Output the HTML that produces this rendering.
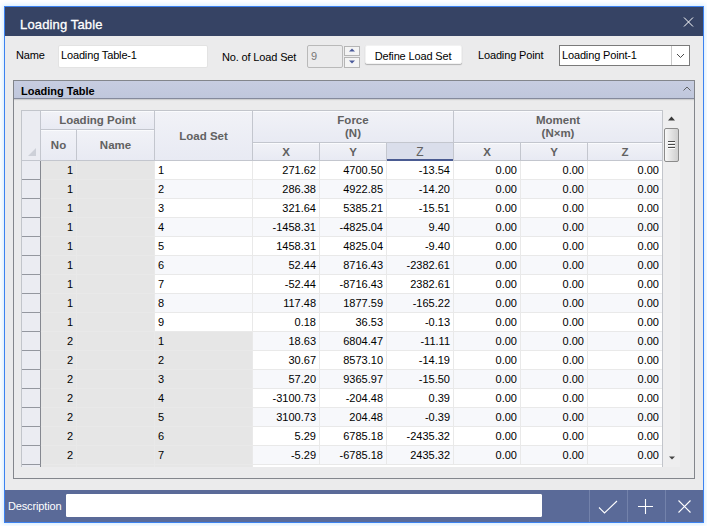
<!DOCTYPE html>
<html><head><meta charset="utf-8"><title>Loading Table</title>
<style>
html,body{margin:0;padding:0;background:#fff;}
body{width:707px;height:526px;position:relative;overflow:hidden;font-family:"Liberation Sans","DejaVu Sans",sans-serif;font-size:11px;color:#000;}
*{box-sizing:border-box;}
i{font-style:normal;}
.abs{position:absolute;}
#win{position:absolute;left:4px;top:6px;width:700px;height:517px;background:#ebebec;border:1px solid #3c82f0;box-shadow:0 0 5px 1px rgba(110,190,255,.32);}
#title{position:absolute;left:0;top:0;width:698px;height:29px;background:#364364;color:#fff;font-size:13px;font-weight:normal;-webkit-text-stroke:0.3px #fff;letter-spacing:0.15px;}
#title span{position:absolute;left:15px;top:10px;}
.lbl{position:absolute;white-space:nowrap;letter-spacing:-0.15px;}
.inp{position:absolute;background:#fff;border:1px solid #e3e3e3;border-radius:2px;white-space:nowrap;letter-spacing:-0.15px;}
#panel{position:absolute;left:8px;top:73px;width:682px;height:399px;border:1px solid #83868c;background:#ebebec;}
#phead{position:absolute;left:0;top:0;width:680px;height:18px;background:linear-gradient(#c7cde1,#c0c7dc);border-bottom:1px solid #858a9c;box-shadow:0 1px 1px rgba(0,0,0,.12);font-weight:bold;font-size:11px;}
#phead span{position:absolute;left:7px;top:4px;}
#grid{position:absolute;left:7px;top:29px;width:642px;height:357px;background:#fff;border:1px solid #c2c5cb;border-bottom:none;overflow:hidden;}
.h{position:absolute;background:linear-gradient(#f1f2f7,#e8eaf3);box-shadow:inset 0 1px 0 #fafbfd;border-right:1px solid #c3c6ce;border-bottom:1px solid #c3c6ce;color:#616161;font-weight:bold;text-align:center;font-size:11.5px;white-space:nowrap;}
#body{position:absolute;left:0;top:50px;width:641px;height:310px;}
.r{position:absolute;left:0;width:641px;height:19px;}
.c{position:absolute;top:0;height:19px;border-right:1px solid #e9e9e9;border-bottom:1px solid #e9e9e9;line-height:18px;font-size:11px;white-space:nowrap;}
.sel{position:absolute;left:-1px;top:0;width:20px;height:19px;background:#ebecf2;border-left:1px solid #858890;border-right:1px solid #858890;border-bottom:1px solid #94979f;}
.no{left:19px;width:36px;background:#e6e6e6;text-align:right;padding-right:3px;}
.nm{left:55px;width:78px;background:#e6e6e6;}
.ls{left:133px;width:98px;padding-left:3px;}
.alt .c{background:#f7f8fb;}
.alt .no,.alt .nm,.g,.alt .g{background:#e6e6e6;}
.n{text-align:right;padding-right:3px;}
.x1{left:231px;width:67px;}
.y1{left:298px;width:67px;}
.z1{left:365px;width:67px;}
.x2{left:432px;width:67px;}
.y2{left:499px;width:67px;}
.z2{left:566px;width:75px;}
#foot{position:absolute;left:0;top:483px;width:698px;height:32px;background:#5a6a98;color:#fff;}
.fb{position:absolute;top:0;width:38px;height:32px;border-left:1px solid #7382ab;}
</style></head><body>
<div id="win">
 <div id="title"><span>Loading Table</span>
  <svg class="abs" style="left:678px;top:9px" width="11" height="12" viewBox="0 0 11 12"><path d="M1 1.5L10 10.5M10 1.5L1 10.5" stroke="#fff" stroke-width="1" fill="none"/></svg>
 </div>
 <div class="lbl" style="left:11px;top:42px">Name</div>
 <div class="inp" style="left:53px;top:38px;width:150px;height:23px;padding:3px 0 0 2px">Loading Table-1</div>
 <div class="lbl" style="left:217px;top:44px">No. of Load Set</div>
 <div class="inp" style="left:302px;top:38px;width:36px;height:23px;background:#ebebec;border-color:#b9b9b9;color:#777;padding:4px 0 0 3px">9</div>
 <div class="abs" style="left:339px;top:39px;width:16px;height:10px;border:1px solid #b5b5b5;background:#f4f4f4"><svg class="abs" style="left:4px;top:1px" width="6" height="4"><path d="M0 3.5L3 0.5L6 3.5Z" fill="#4a5a9a"/></svg></div>
 <div class="abs" style="left:339px;top:50px;width:16px;height:11px;border:1px solid #b5b5b5;background:#f4f4f4"><svg class="abs" style="left:4px;top:2px" width="6" height="4"><path d="M0 0.5L3 3.5L6 0.5Z" fill="#4a5a9a"/></svg></div>
 <div class="inp" style="left:360px;top:38px;width:97px;height:19px;border-color:#f2f2f2;box-shadow:0 1px 1px rgba(0,0,0,.25);text-align:center;padding-top:4px;padding-right:1px">Define Load Set</div>
 <div class="lbl" style="left:473px;top:42px">Loading Point</div>
 <div class="inp" style="left:554px;top:38px;width:131px;height:21px;border-color:#7a7a7a;border-radius:0;padding:3px 0 0 2px">Loading Point-1
   <div class="abs" style="left:111px;top:0;width:1px;height:19px;background:#c8c8c8"></div>
   <svg class="abs" style="left:116px;top:7px" width="9" height="6"><path d="M1 1L4.5 4.5L8 1" stroke="#333" stroke-width="0.9" fill="none"/></svg>
 </div>
 <div id="panel">
  <div id="phead"><span>Loading Table</span>
   <svg class="abs" style="left:669px;top:5px" width="8" height="6"><path d="M0.5 4.5L4 1L7.5 4.5" stroke="#555" stroke-width="0.9" fill="none"/></svg>
  </div>
  <div id="grid">
   <div class="h" style="left:0;top:0;width:19px;height:50px;background:#ebecf2;box-shadow:none"><svg class="abs" style="left:6px;top:37px" width="8" height="8"><path d="M8 0V8H0Z" fill="#cdd0d8"/></svg></div>
   <div class="h" style="left:19px;top:0;width:114px;height:19px;line-height:19px">Loading Point</div>
   <div class="h" style="left:19px;top:19px;width:36px;height:31px;line-height:31px">No</div>
   <div class="h" style="left:55px;top:19px;width:78px;height:31px;line-height:31px">Name</div>
   <div class="h" style="left:133px;top:0;width:98px;height:50px;line-height:51px">Load Set</div>
   <div class="h" style="left:231px;top:0;width:201px;height:32px;line-height:13px;padding-top:3px">Force<br>(N)</div>
   <div class="h" style="left:231px;top:32px;width:67px;height:18px;line-height:18px">X</div>
   <div class="h" style="left:298px;top:32px;width:67px;height:18px;line-height:18px">Y</div>
   <div class="h" style="left:365px;top:32px;width:67px;height:18px;line-height:19px;background:#dadeeb;border-bottom:none;box-shadow:none;font-weight:normal;font-size:12px">Z<div class="abs" style="left:0;top:16px;width:66px;height:2px;background:#4a5b92"></div></div>
   <div class="h" style="left:432px;top:0;width:209px;height:32px;line-height:13px;padding-top:3px">Moment<br>(N×m)</div>
   <div class="h" style="left:432px;top:32px;width:67px;height:18px;line-height:18px">X</div>
   <div class="h" style="left:499px;top:32px;width:67px;height:18px;line-height:18px">Y</div>
   <div class="h" style="left:566px;top:32px;width:75px;height:18px;line-height:18px">Z</div>
   <div id="body">
<div class="r" style="top:0px"><i class="sel"></i><i class="c no">1</i><i class="c nm"></i><i class="c ls">1</i><i class="c n x1">271.62</i><i class="c n y1">4700.50</i><i class="c n z1">-13.54</i><i class="c n x2">0.00</i><i class="c n y2">0.00</i><i class="c n z2">0.00</i></div>
<div class="r alt" style="top:19px"><i class="sel"></i><i class="c no">1</i><i class="c nm"></i><i class="c ls">2</i><i class="c n x1">286.38</i><i class="c n y1">4922.85</i><i class="c n z1">-14.20</i><i class="c n x2">0.00</i><i class="c n y2">0.00</i><i class="c n z2">0.00</i></div>
<div class="r" style="top:38px"><i class="sel"></i><i class="c no">1</i><i class="c nm"></i><i class="c ls">3</i><i class="c n x1">321.64</i><i class="c n y1">5385.21</i><i class="c n z1">-15.51</i><i class="c n x2">0.00</i><i class="c n y2">0.00</i><i class="c n z2">0.00</i></div>
<div class="r alt" style="top:57px"><i class="sel"></i><i class="c no">1</i><i class="c nm"></i><i class="c ls">4</i><i class="c n x1">-1458.31</i><i class="c n y1">-4825.04</i><i class="c n z1">9.40</i><i class="c n x2">0.00</i><i class="c n y2">0.00</i><i class="c n z2">0.00</i></div>
<div class="r" style="top:76px"><i class="sel"></i><i class="c no">1</i><i class="c nm"></i><i class="c ls">5</i><i class="c n x1">1458.31</i><i class="c n y1">4825.04</i><i class="c n z1">-9.40</i><i class="c n x2">0.00</i><i class="c n y2">0.00</i><i class="c n z2">0.00</i></div>
<div class="r alt" style="top:95px"><i class="sel"></i><i class="c no">1</i><i class="c nm"></i><i class="c ls">6</i><i class="c n x1">52.44</i><i class="c n y1">8716.43</i><i class="c n z1">-2382.61</i><i class="c n x2">0.00</i><i class="c n y2">0.00</i><i class="c n z2">0.00</i></div>
<div class="r" style="top:114px"><i class="sel"></i><i class="c no">1</i><i class="c nm"></i><i class="c ls">7</i><i class="c n x1">-52.44</i><i class="c n y1">-8716.43</i><i class="c n z1">2382.61</i><i class="c n x2">0.00</i><i class="c n y2">0.00</i><i class="c n z2">0.00</i></div>
<div class="r alt" style="top:133px"><i class="sel"></i><i class="c no">1</i><i class="c nm"></i><i class="c ls">8</i><i class="c n x1">117.48</i><i class="c n y1">1877.59</i><i class="c n z1">-165.22</i><i class="c n x2">0.00</i><i class="c n y2">0.00</i><i class="c n z2">0.00</i></div>
<div class="r" style="top:152px"><i class="sel"></i><i class="c no">1</i><i class="c nm"></i><i class="c ls">9</i><i class="c n x1">0.18</i><i class="c n y1">36.53</i><i class="c n z1">-0.13</i><i class="c n x2">0.00</i><i class="c n y2">0.00</i><i class="c n z2">0.00</i></div>
<div class="r alt" style="top:171px"><i class="sel"></i><i class="c no">2</i><i class="c nm"></i><i class="c ls g">1</i><i class="c n x1">18.63</i><i class="c n y1">6804.47</i><i class="c n z1">-11.11</i><i class="c n x2">0.00</i><i class="c n y2">0.00</i><i class="c n z2">0.00</i></div>
<div class="r" style="top:190px"><i class="sel"></i><i class="c no">2</i><i class="c nm"></i><i class="c ls g">2</i><i class="c n x1">30.67</i><i class="c n y1">8573.10</i><i class="c n z1">-14.19</i><i class="c n x2">0.00</i><i class="c n y2">0.00</i><i class="c n z2">0.00</i></div>
<div class="r alt" style="top:209px"><i class="sel"></i><i class="c no">2</i><i class="c nm"></i><i class="c ls g">3</i><i class="c n x1">57.20</i><i class="c n y1">9365.97</i><i class="c n z1">-15.50</i><i class="c n x2">0.00</i><i class="c n y2">0.00</i><i class="c n z2">0.00</i></div>
<div class="r" style="top:228px"><i class="sel"></i><i class="c no">2</i><i class="c nm"></i><i class="c ls g">4</i><i class="c n x1">-3100.73</i><i class="c n y1">-204.48</i><i class="c n z1">0.39</i><i class="c n x2">0.00</i><i class="c n y2">0.00</i><i class="c n z2">0.00</i></div>
<div class="r alt" style="top:247px"><i class="sel"></i><i class="c no">2</i><i class="c nm"></i><i class="c ls g">5</i><i class="c n x1">3100.73</i><i class="c n y1">204.48</i><i class="c n z1">-0.39</i><i class="c n x2">0.00</i><i class="c n y2">0.00</i><i class="c n z2">0.00</i></div>
<div class="r" style="top:266px"><i class="sel"></i><i class="c no">2</i><i class="c nm"></i><i class="c ls g">6</i><i class="c n x1">5.29</i><i class="c n y1">6785.18</i><i class="c n z1">-2435.32</i><i class="c n x2">0.00</i><i class="c n y2">0.00</i><i class="c n z2">0.00</i></div>
<div class="r alt" style="top:285px"><i class="sel"></i><i class="c no">2</i><i class="c nm"></i><i class="c ls g">7</i><i class="c n x1">-5.29</i><i class="c n y1">-6785.18</i><i class="c n z1">2435.32</i><i class="c n x2">0.00</i><i class="c n y2">0.00</i><i class="c n z2">0.00</i></div>
   <div class="r" style="top:304px"><i class="sel"></i><i class="c no"></i><i class="c nm"></i><i class="c ls g"></i></div>
   </div>
  </div>
  <div class="abs" style="left:649px;top:29px;width:17px;height:357px;background:#eeeeef">
    <svg class="abs" style="left:5px;top:6px" width="7" height="5"><path d="M0 4.5L3.5 0.5L7 4.5Z" fill="#3a3a3a"/></svg>
    <div class="abs" style="left:1px;top:18px;width:15px;height:34px;border:1px solid #8b8b8b;border-radius:2px;background:linear-gradient(90deg,#f8f8f8,#e4e4e4 45%,#cfcfcf)">
      <div class="abs" style="left:3px;top:12px;width:7px;height:1px;background:#4a4a4a;box-shadow:0 1px 0 #fff"></div>
      <div class="abs" style="left:3px;top:15px;width:7px;height:1px;background:#4a4a4a;box-shadow:0 1px 0 #fff"></div>
      <div class="abs" style="left:3px;top:18px;width:7px;height:1px;background:#4a4a4a;box-shadow:0 1px 0 #fff"></div>
    </div>
    <svg class="abs" style="left:6px;top:346px" width="6" height="4"><path d="M0 0.5L3 3.5L6 0.5Z" fill="#444"/></svg>
  </div>
 </div>
 <div id="foot">
  <div class="lbl" style="left:3px;top:10px">Description</div>
  <div class="inp" style="left:61px;top:4px;width:476px;height:23px;border-color:#fff;border-radius:1px"></div>
  <div class="fb" style="left:584px"><svg class="abs" style="left:8px;top:10px" width="20" height="14"><path d="M1 7.5L6.5 13L19 1" stroke="#fff" stroke-width="1.1" fill="none"/></svg></div>
  <div class="fb" style="left:622px"><svg class="abs" style="left:10px;top:9px" width="15" height="15"><path d="M7.5 0V15M0 7.5H15" stroke="#fff" stroke-width="1.1" fill="none"/></svg></div>
  <div class="fb" style="left:660px"><svg class="abs" style="left:12px;top:10px" width="13" height="13"><path d="M0.5 0.5L12.5 12.5M12.5 0.5L0.5 12.5" stroke="#fff" stroke-width="1.1" fill="none"/></svg></div>
 </div>
</div>
</body></html>
